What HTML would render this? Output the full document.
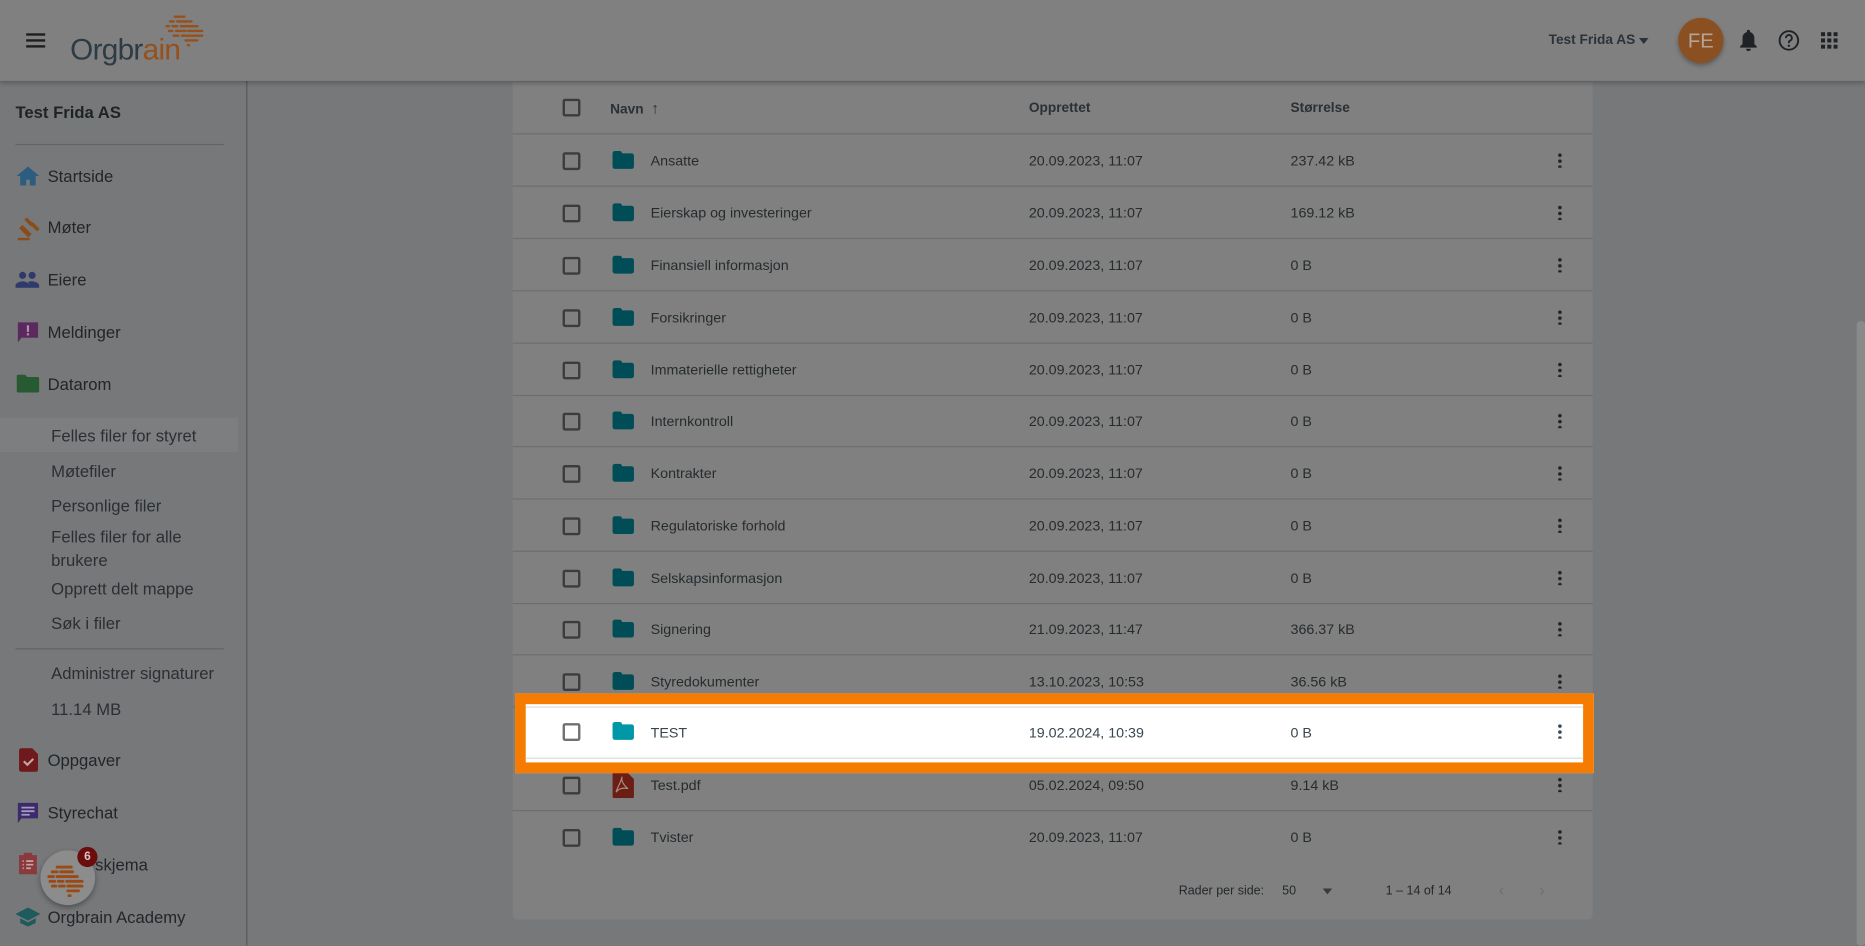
<!DOCTYPE html>
<html><head><meta charset="utf-8"><style>
*{box-sizing:border-box;margin:0;padding:0}
html,body{width:1865px;height:946px;overflow:hidden;background:#77787a;font-family:"Liberation Sans",Roboto,sans-serif}
#w{position:absolute;left:0;top:0;width:1568px;height:795px;transform:scale(1.18941);transform-origin:0 0;background:#77787a}
.a{position:absolute;white-space:nowrap}
.hdr{left:0;top:0;width:1568px;height:68px;background:#808080;box-shadow:0 2px 4px rgba(0,0,0,.25);z-index:3}
.side{left:0;top:68px;width:208px;height:727px;background:#77787a;border-right:1px solid #58595b}
.nav{font-size:14px;color:#222629}
.sub{font-size:14px;color:#2b2f33;left:43px}
.card{left:431px;top:69px;width:908px;height:704px;background:#808080;border-radius:0 0 4px 4px}
.row{position:absolute;left:0;width:908px;height:44px;border-bottom:1px solid #6e6e6e;font-size:12px;color:#262b2e}
.row span{position:absolute;top:50%;transform:translateY(-50%)}
.cb{position:absolute;left:42px;top:15px;width:15px;height:15px;border:2px solid #3c3c3c;border-radius:2px}
.fd{position:absolute;left:84px;top:16px;width:18px;height:13px;background:#004d57;border-radius:2px}
.fd:before{content:"";position:absolute;left:0;top:-2px;width:8px;height:4px;background:inherit;border-radius:2px 2px 0 0}
.kb{position:absolute;left:879px;top:15px;width:3px;height:13px;background:radial-gradient(circle,#222 1.4px,transparent 1.6px) 0 0/3px 5px repeat-y}
</style></head><body><div id="w">
<div class="a hdr">
 <div class="a" style="left:22px;top:28px;width:16px;height:2px;background:#1e1e1e;box-shadow:0 5px 0 #1e1e1e,0 10px 0 #1e1e1e"></div>
 <div class="a" style="left:59px;top:28px;font-size:25px;color:#2d3c44;letter-spacing:-.6px">Orgbr<span style="color:#96501b">ain</span></div>
 <svg class="a" style="left:138px;top:12px" width="34" height="30" viewBox="0 0 34 30"><g stroke="#96501b" stroke-width="2" stroke-linecap="round">
 <path d="M9 2h8M5 6h3M11 6h12M2 10h2M7 10h4M14 10h14M4 14h3M10 14h8M20 14h12M8 18h4M15 18h17M18 22h10M20 26h1"/></g></svg>
 <div class="a" style="left:1302px;top:28px;font-size:11.5px;font-weight:bold;color:#2a3338">Test Frida AS</div>
 <div class="a" style="left:1378px;top:32px;border:4px solid transparent;border-top:5px solid #2a3338"></div>
 <div class="a" style="left:1411px;top:15px;width:38px;height:38px;border-radius:50%;background:#8a5022;box-shadow:0 2px 4px rgba(0,0,0,.3);color:#b5a597;font-size:17px;text-align:center;line-height:39px">FE</div>
 <svg class="a" style="left:1462px;top:25px" width="16" height="18" viewBox="0 0 16 18"><path d="M8 0a1.3 1.3 0 0 1 1.3 1.3v.6A5 5 0 0 1 13 7v5l2 2v1H1v-1l2-2V7a5 5 0 0 1 3.7-5.1v-.6A1.3 1.3 0 0 1 8 0zM6 16h4a2 2 0 0 1-4 0z" fill="#1f2326"/></svg>
 <svg class="a" style="left:1495px;top:25px" width="18" height="18" viewBox="0 0 18 18"><circle cx="9" cy="9" r="7.8" fill="none" stroke="#1f2326" stroke-width="1.6"/><path d="M6.5 7a2.5 2.5 0 1 1 3.5 2.2c-.7.4-1 .8-1 1.6v.5" fill="none" stroke="#1f2326" stroke-width="1.6"/><circle cx="9" cy="13.5" r="1" fill="#1f2326"/></svg>
 <svg class="a" style="left:1531px;top:27px" width="14" height="14" viewBox="0 0 14 14" fill="#1f2326"><rect x="0" y="0" width="3.4" height="3.4"/><rect x="5.3" y="0" width="3.4" height="3.4"/><rect x="10.6" y="0" width="3.4" height="3.4"/><rect x="0" y="5.3" width="3.4" height="3.4"/><rect x="5.3" y="5.3" width="3.4" height="3.4"/><rect x="10.6" y="5.3" width="3.4" height="3.4"/><rect x="0" y="10.6" width="3.4" height="3.4"/><rect x="5.3" y="10.6" width="3.4" height="3.4"/><rect x="10.6" y="10.6" width="3.4" height="3.4"/></svg>
</div>
<div class="a side"></div>
<div class="a" style="left:13px;top:86px;font-size:14px;font-weight:bold;color:#1e2326">Test Frida AS</div>
<div class="a" style="left:13px;top:121px;width:175px;height:1px;background:#626365"></div>
<svg class="a" style="left:14px;top:140px" width="19" height="16" viewBox="0 0 19 16"><path d="M9.5 0L0 8h3v8h5v-5h3v5h5V8h3z" fill="#2a5d80"/></svg>
<div class="a nav" style="left:40px;top:140px">Startside</div>
<svg class="a" style="left:14px;top:183px" width="20" height="20" viewBox="0 0 20 20"><g fill="#8a4c18"><rect x="9" y="0" width="3" height="8" transform="rotate(-45 10 4)"/><rect x="5" y="6" width="4" height="11" transform="rotate(-45 7 11)"/><rect x="14" y="4" width="3" height="8" transform="rotate(-45 15 8)"/><rect x="1" y="17" width="10" height="2"/></g></svg>
<div class="a nav" style="left:40px;top:183px">Møter</div>
<svg class="a" style="left:13px;top:228px" width="20" height="14" viewBox="0 0 20 14"><g fill="#2f3a6b"><circle cx="6" cy="3.5" r="3"/><circle cx="14" cy="3.5" r="3"/><path d="M0 14v-2c0-2 4-3.5 6-3.5s6 1.5 6 3.5v2zM12 14v-2c0-1-.5-2-1.5-2.8C12 8.6 13 8.5 14 8.5c2 0 6 1.5 6 3.5v2z"/></g></svg>
<div class="a nav" style="left:40px;top:227px">Eiere</div>
<svg class="a" style="left:14px;top:270px" width="19" height="19" viewBox="0 0 19 19"><path d="M1 1h17v13H4l-3 4z" fill="#5b2a5c"/><rect x="8.6" y="3.5" width="1.8" height="5.5" fill="#b48fb5"/><rect x="8.6" y="10.2" width="1.8" height="1.8" fill="#b48fb5"/></svg>
<div class="a nav" style="left:40px;top:271px">Meldinger</div>
<svg class="a" style="left:14px;top:315px" width="19" height="15" viewBox="0 0 19 15"><path d="M0 1.5Q0 0 1.5 0H7l2 2h8.5Q19 2 19 3.5v10Q19 15 17.5 15h-16Q0 15 0 13.5z" fill="#275a30"/></svg>
<div class="a nav" style="left:40px;top:315px">Datarom</div>
<div class="a" style="left:0;top:351px;width:200px;height:29px;background:#7d7e80"></div>
<div class="a sub" style="top:358px">Felles filer for styret</div>
<div class="a sub" style="top:388px">Møtefiler</div>
<div class="a sub" style="top:417px">Personlige filer</div>
<div class="a sub" style="top:441px;line-height:20px">Felles filer for alle<br>brukere</div>
<div class="a sub" style="top:487px">Opprett delt mappe</div>
<div class="a sub" style="top:516px">Søk i filer</div>
<div class="a" style="left:13px;top:545px;width:175px;height:1px;background:#626365"></div>
<div class="a sub" style="top:558px">Administrer signaturer</div>
<div class="a sub" style="top:588px">11.14 MB</div>
<svg class="a" style="left:16px;top:629px" width="16" height="20" viewBox="0 0 16 20"><path d="M2 0h9l5 5v13a2 2 0 0 1-2 2H2a2 2 0 0 1-2-2V2a2 2 0 0 1 2-2z" fill="#6e1a1c"/><path d="M4 11l3 3 5-5" stroke="#c9a3a3" stroke-width="1.8" fill="none"/></svg>
<div class="a nav" style="left:40px;top:631px">Oppgaver</div>
<svg class="a" style="left:14px;top:674px" width="19" height="19" viewBox="0 0 19 19"><path d="M1 1h17v13H4l-3 4z" fill="#3c2a6a"/><path d="M4 5h11M4 8h11M4 11h7" stroke="#a39bc0" stroke-width="1.5"/></svg>
<div class="a nav" style="left:40px;top:675px">Styrechat</div>
<svg class="a" style="left:15px;top:716px" width="17" height="20" viewBox="0 0 17 20"><path d="M1 3h15v16H1z" fill="#8a3a3c"/><rect x="5" y="1" width="7" height="4" fill="#8a3a3c"/><path d="M4 8h1M7 8h6M4 11h1M7 11h6M4 14h1M7 14h4" stroke="#c9a3a3" stroke-width="1.4"/></svg>
<div class="a nav" style="left:80px;top:719px">skjema</div>
<svg class="a" style="left:13px;top:763px" width="21" height="16" viewBox="0 0 21 16"><path d="M10.5 0L0 5.5l10.5 5.5L21 5.5zM4 9v4l6.5 3 6.5-3V9l-6.5 3.5z" fill="#1f5a5c"/></svg>
<div class="a nav" style="left:40px;top:763px">Orgbrain Academy</div>
<div class="a" style="left:34px;top:715px;width:46px;height:46px;border-radius:50%;background:#8c8c8c;box-shadow:0 2px 5px rgba(0,0,0,.35)"></div>
<svg class="a" style="left:38px;top:727px" width="40" height="30" viewBox="0 0 40 30"><g stroke="#9a4a14" stroke-width="2.4" stroke-linecap="round"><path d="M10 2h12M6 6h4M13 6h10M3 10h4M10 10h17M4 14h4M11 14h4M18 14h13M6 18h3M12 18h4M19 18h12M19 22h9M20 26h1"/></g></svg>
<div class="a" style="left:65px;top:712px;width:17px;height:17px;border-radius:50%;background:#6b0d0d;color:#d8c7c7;font-size:10px;font-weight:bold;text-align:center;line-height:17px">6</div>
<div class="a" style="left:1560px;top:68px;width:8px;height:727px;background:#77787a"></div>
<div class="a" style="left:1561px;top:270px;width:7px;height:525px;background:#8a8a8a;border-radius:3px"></div>
<div class="a card">
 <div class="row" style="top:0"><div class="cb" style="top:14px"></div><span style="left:82px;font-weight:bold;font-size:11.5px;color:#2a3033">Navn &nbsp;<b style="font-size:13px">↑</b></span><span style="left:434px;font-weight:bold;font-size:11.5px;color:#2a3033">Opprettet</span><span style="left:654px;font-weight:bold;font-size:11.5px;color:#2a3033">Størrelse</span></div>
 <div class="row" style="top:44px"><div class="cb"></div><div class="fd"></div><span style="left:116px">Ansatte</span><span style="left:434px">20.09.2023, 11:07</span><span style="left:654px">237.42 kB</span><div class="kb"></div></div>
 <div class="row" style="top:88px"><div class="cb"></div><div class="fd"></div><span style="left:116px">Eierskap og investeringer</span><span style="left:434px">20.09.2023, 11:07</span><span style="left:654px">169.12 kB</span><div class="kb"></div></div>
 <div class="row" style="top:132px"><div class="cb"></div><div class="fd"></div><span style="left:116px">Finansiell informasjon</span><span style="left:434px">20.09.2023, 11:07</span><span style="left:654px">0 B</span><div class="kb"></div></div>
 <div class="row" style="top:176px"><div class="cb"></div><div class="fd"></div><span style="left:116px">Forsikringer</span><span style="left:434px">20.09.2023, 11:07</span><span style="left:654px">0 B</span><div class="kb"></div></div>
 <div class="row" style="top:220px"><div class="cb"></div><div class="fd"></div><span style="left:116px">Immaterielle rettigheter</span><span style="left:434px">20.09.2023, 11:07</span><span style="left:654px">0 B</span><div class="kb"></div></div>
 <div class="row" style="top:263px"><div class="cb"></div><div class="fd"></div><span style="left:116px">Internkontroll</span><span style="left:434px">20.09.2023, 11:07</span><span style="left:654px">0 B</span><div class="kb"></div></div>
 <div class="row" style="top:307px"><div class="cb"></div><div class="fd"></div><span style="left:116px">Kontrakter</span><span style="left:434px">20.09.2023, 11:07</span><span style="left:654px">0 B</span><div class="kb"></div></div>
 <div class="row" style="top:351px"><div class="cb"></div><div class="fd"></div><span style="left:116px">Regulatoriske forhold</span><span style="left:434px">20.09.2023, 11:07</span><span style="left:654px">0 B</span><div class="kb"></div></div>
 <div class="row" style="top:395px"><div class="cb"></div><div class="fd"></div><span style="left:116px">Selskapsinformasjon</span><span style="left:434px">20.09.2023, 11:07</span><span style="left:654px">0 B</span><div class="kb"></div></div>
 <div class="row" style="top:438px"><div class="cb"></div><div class="fd"></div><span style="left:116px">Signering</span><span style="left:434px">21.09.2023, 11:47</span><span style="left:654px">366.37 kB</span><div class="kb"></div></div>
 <div class="row" style="top:482px"><div class="cb"></div><div class="fd"></div><span style="left:116px">Styredokumenter</span><span style="left:434px">13.10.2023, 10:53</span><span style="left:654px">36.56 kB</span><div class="kb"></div></div>
 <div class="row" style="top:569px"><div class="cb"></div><svg style="position:absolute;left:84px;top:11px" width="18" height="22" viewBox="0 0 18 22"><path d="M1 0h11l6 6v15a1 1 0 0 1-1 1H1a1 1 0 0 1-1-1V1a1 1 0 0 1 1-1z" fill="#6b1f14"/><path d="M8 4c-1 3 1 7 5 10-4-1-8 0-10 3 1-4 4-8 5-13z" fill="none" stroke="#b08a85" stroke-width="1"/></svg><span style="left:116px">Test.pdf</span><span style="left:434px">05.02.2024, 09:50</span><span style="left:654px">9.14 kB</span><div class="kb"></div></div>
 <div class="row" style="top:613px;border-bottom:none"><div class="cb"></div><div class="fd"></div><span style="left:116px">Tvister</span><span style="left:434px">20.09.2023, 11:07</span><span style="left:654px">0 B</span><div class="kb"></div></div>
 <div class="a" style="left:560px;top:674px;font-size:10.5px;color:#23282b">Rader per side:</div>
 <div class="a" style="left:647px;top:674px;font-size:10.5px;color:#23282b">50</div>
 <div class="a" style="left:681px;top:678px;border:4px solid transparent;border-top:5px solid #3a3a3a"></div>
 <div class="a" style="left:734px;top:674px;font-size:10.5px;color:#23282b">1 – 14 of 14</div>
 <div class="a" style="left:829px;top:671px;font-size:14px;color:#6e6e6e">&#x2039;</div>
 <div class="a" style="left:863px;top:671px;font-size:14px;color:#6e6e6e">&#x203A;</div>
</div>
<div class="a" style="left:433px;top:583px;width:907px;height:67px;border:9px solid #f57c00;background:#fff">
 <div class="a" style="left:0;top:2px;width:889px;height:1px;background:#dcdcdc"></div>
 <div class="a" style="left:0;top:45px;width:889px;height:1px;background:#dcdcdc"></div>
 <div class="a" style="left:31px;top:16px;width:15px;height:15px;border:2px solid #707070;border-radius:2px"></div>
 <div class="a" style="left:73px;top:17px;width:18px;height:13px;background:#0097a7;border-radius:2px"></div>
 <div class="a" style="left:73px;top:15px;width:8px;height:4px;background:#0097a7;border-radius:2px 2px 0 0"></div>
 <div class="a" style="left:105px;top:17px;font-size:12px;color:#37474f">TEST</div>
 <div class="a" style="left:423px;top:17px;font-size:12px;color:#37474f">19.02.2024, 10:39</div>
 <div class="a" style="left:643px;top:17px;font-size:12px;color:#37474f">0 B</div>
 <div class="a" style="left:868px;top:16px;width:3px;height:13px;background:radial-gradient(circle,#37474f 1.4px,transparent 1.6px) 0 0/3px 5px repeat-y"></div>
</div>
</div></body></html>
